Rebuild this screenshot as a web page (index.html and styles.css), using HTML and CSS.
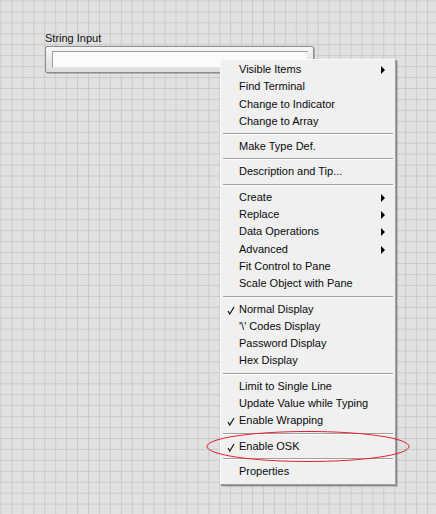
FILE: index.html
```html
<!DOCTYPE html>
<html>
<head>
<meta charset="utf-8">
<link rel="stylesheet" href="styles.css">
</head>
<body>
<div class="canvas">
  <div class="control">
    <div class="label">String Input</div>
    <div class="frame"><div class="field"></div></div>
  </div>

  <div class="menu">
    <div class="item">Visible Items<span class="arrow"></span></div>
    <div class="item">Find Terminal</div>
    <div class="item">Change to Indicator</div>
    <div class="item">Change to Array</div>
    <div class="sep"></div>
    <div class="item">Make Type Def.</div>
    <div class="sep"></div>
    <div class="item">Description and Tip...</div>
    <div class="sep"></div>
    <div class="item">Create<span class="arrow"></span></div>
    <div class="item">Replace<span class="arrow"></span></div>
    <div class="item">Data Operations<span class="arrow"></span></div>
    <div class="item">Advanced<span class="arrow"></span></div>
    <div class="item">Fit Control to Pane</div>
    <div class="item">Scale Object with Pane</div>
    <div class="sep"></div>
    <div class="item"><svg class="check" width="8" height="9" viewBox="0 0 8 9"><path d="M1 5 L2.8 8 L7 1" fill="none" stroke="#111" stroke-width="1.2"/></svg>Normal Display</div>
    <div class="item">'\' Codes Display</div>
    <div class="item">Password Display</div>
    <div class="item">Hex Display</div>
    <div class="sep"></div>
    <div class="item">Limit to Single Line</div>
    <div class="item">Update Value while Typing</div>
    <div class="item"><svg class="check" width="8" height="9" viewBox="0 0 8 9"><path d="M1 5 L2.8 8 L7 1" fill="none" stroke="#111" stroke-width="1.2"/></svg>Enable Wrapping</div>
    <div class="sep"></div>
    <div class="item"><svg class="check" width="8" height="9" viewBox="0 0 8 9"><path d="M1 5 L2.8 8 L7 1" fill="none" stroke="#111" stroke-width="1.2"/></svg>Enable OSK</div>
    <div class="sep"></div>
    <div class="item">Properties</div>
  </div>

  <svg class="highlight" width="204" height="33" viewBox="0 0 204 33">
    <ellipse cx="102" cy="16.5" rx="101" ry="15" fill="none" stroke="#e3202c" stroke-width="1"/>
  </svg>
</div>
</body>
</html>
```

FILE: styles.css
```css
html, body {
  margin: 0;
  padding: 0;
}
body {
  width: 436px;
  height: 514px;
  overflow: hidden;
  font-family: "Liberation Sans", Arial, sans-serif;
  font-size: 11px;
  color: #000;
  background-color: #e1e1e1;
  background-image:
    linear-gradient(to right, #cacaca 1px, transparent 1px),
    linear-gradient(to bottom, #cacaca 1px, transparent 1px);
  background-size: 10.94px 10.94px;
  background-position: 0.5px 0.5px;
}
.canvas {
  position: relative;
  width: 436px;
  height: 514px;
  padding: 31px 0 0 45px;
  box-sizing: border-box;
}
.control {
  width: 269px;
}
.label {
  height: 14px;
  line-height: 14px;
  font-size: 11px;
  color: #101010;
}
.frame {
  margin-top: 1px;
  height: 27px;
  box-sizing: border-box;
  border: 1px solid #8e8e8e;
  border-radius: 2px;
  background: linear-gradient(#f6f6f6, #dcdcdc);
  padding: 4px 5px 4px 6px;
  box-shadow: 1px 1px 0 #b0b0b0;
}
.field {
  height: 100%;
  box-sizing: border-box;
  background: #fbfbfb;
  border: 1px solid #a0a0a0;
  border-right-color: #e6e6e6;
  border-bottom-color: #e6e6e6;
}
.menu {
  position: absolute;
  left: 220px;
  top: 59px;
  width: 176px;
  box-sizing: border-box;
  background: #f0f0f0;
  border: 1px solid #fafafa;
  border-right: 1px solid #a0a0a0;
  border-bottom: 1px solid #a0a0a0;
  box-shadow: 1px 1px 0 #8a8a8a, 2px 2px 0 rgba(120,120,120,0.35);
  padding: 1px 0 4px 0;
}
.item {
  position: relative;
  height: 17.3px;
  line-height: 17.3px;
  padding-left: 18px;
  white-space: nowrap;
  color: #0a0a0a;
}
.check {
  position: absolute;
  left: 6px;
  top: 5px;
}
.arrow {
  position: absolute;
  right: 10px;
  top: 5px;
  width: 0;
  height: 0;
  border-top: 4px solid transparent;
  border-bottom: 4px solid transparent;
  border-left: 4px solid #000;
}
.sep {
  height: 8px;
  box-sizing: border-box;
  padding-top: 3px;
  margin: 0 2px;
}
.sep::before {
  content: "";
  display: block;
  height: 1px;
  background: #a0a0a0;
  border-bottom: 1px solid #ffffff;
}
.highlight {
  position: absolute;
  left: 206px;
  top: 430px;
}
```
